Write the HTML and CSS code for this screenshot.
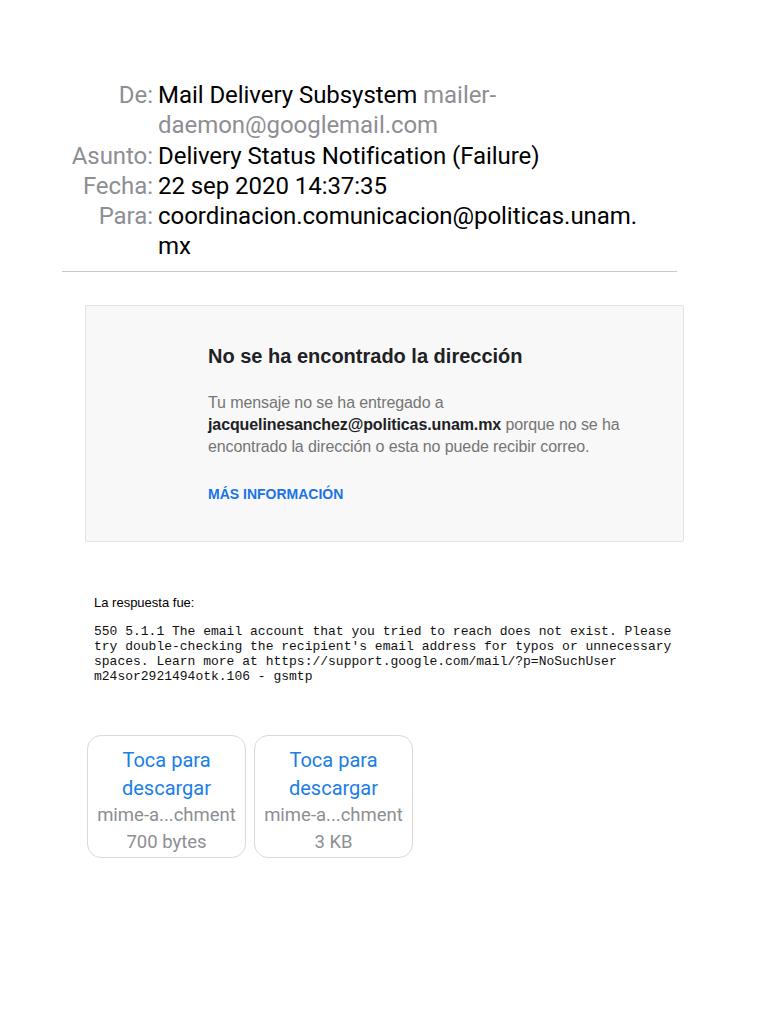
FILE: index.html
```html
<!DOCTYPE html>
<html lang="es">
<head>
<meta charset="utf-8">
<title>Delivery Status Notification (Failure)</title>
<link rel="stylesheet" href="styles.css">
</head>
<body>
<div class="page">
  <div class="headers">
    <div class="label">De:</div>
    <div class="value">Mail Delivery Subsystem <span class="muted">mailer-<br>daemon@googlemail.com</span></div>
    <div class="label">Asunto:</div>
    <div class="value">Delivery Status Notification (Failure)</div>
    <div class="label">Fecha:</div>
    <div class="value">22 sep 2020 14:37:35</div>
    <div class="label">Para:</div>
    <div class="value">coordinacion.comunicacion@politicas.unam.<br>mx</div>
  </div>
  <hr class="divider">
  <div class="card">
    <h1 class="card-title">No se ha encontrado la dirección</h1>
    <p class="card-text">Tu mensaje no se ha entregado a<br><b>jacquelinesanchez@politicas.unam.mx</b> porque no se ha<br>encontrado la dirección o esta no puede recibir correo.</p>
    <a class="card-link">MÁS INFORMACIÓN</a>
  </div>
  <div class="response">
    <p class="response-label">La respuesta fue:</p>
    <pre class="response-code">550 5.1.1 The email account that you tried to reach does not exist. Please
try double-checking the recipient's email address for typos or unnecessary
spaces. Learn more at https://support.google.com/mail/?p=NoSuchUser
m24sor2921494otk.106 - gsmtp</pre>
  </div>
  <div class="attachments">
    <div class="attachment">
      <div class="att-action">Toca para<br>descargar</div>
      <div class="att-meta">mime-a...chment<br>700 bytes</div>
    </div>
    <div class="attachment">
      <div class="att-action">Toca para<br>descargar</div>
      <div class="att-meta">mime-a...chment<br>3 KB</div>
    </div>
  </div>
</div>
</body>
</html>
```
FILE: styles.css
```css
html, body {
  margin: 0;
  padding: 0;
  background: #ffffff;
}
.page {
  width: 768px;
  padding-top: 80px;
  font-family: Roboto, "Liberation Sans", sans-serif;
}
.headers {
  display: grid;
  grid-template-columns: 153px auto;
  column-gap: 5px;
  font-size: 24px;
  line-height: 30.3px;
  color: #000;
  letter-spacing: -0.05px;
}
.label {
  text-align: right;
  color: #8e8e93;
}
.value {
  color: #000;
}
.muted {
  color: #8e8e93;
}
.divider {
  margin: 9px 0 0 62px;
  width: 615px;
  border: none;
  border-top: 1px solid #c8c8c8;
  height: 0;
}
.card {
  margin: 33px 0 0 85px;
  width: 475px;
  height: 235px;
  padding: 0 0 0 122px;
  background: #f8f8f8;
  border: 1px solid #e3e3e3;
  border-radius: 2px;
  font-family: "Liberation Sans", Arial, sans-serif;
  box-sizing: content-box;
}
.card-title {
  margin: 37px 0 0 0;
  font-size: 20px;
  line-height: 26px;
  font-weight: bold;
  color: #202124;
}
.card-text {
  margin: 23px 0 0 0;
  font-size: 16px;
  line-height: 22px;
  color: #757575;
  letter-spacing: -0.1px;
}
.card-text b {
  color: #202124;
}
.card-link {
  display: block;
  margin-top: 27px;
  font-size: 14px;
  line-height: 18px;
  font-weight: bold;
  color: #1a73e8;
}
.response {
  margin: 52px 0 0 94px;
  font-family: "Liberation Sans", Arial, sans-serif;
  color: #000;
}
.response-label {
  margin: 0;
  font-size: 13px;
  line-height: 18px;
}
.response-code {
  margin: 12px 0 0 0;
  font-family: "Liberation Mono", "Courier New", monospace;
  font-size: 13px;
  line-height: 15px;
  color: #111;
}
.attachments {
  display: flex;
  gap: 8px;
  margin: 51px 0 0 87px;
}
.attachment {
  width: 159px;
  height: 123px;
  border: 1px solid #dadada;
  border-radius: 14px;
  text-align: center;
  padding-top: 10px;
  box-sizing: border-box;
  font-family: Roboto, "Liberation Sans", sans-serif;
}
.att-action {
  color: #1a7ee6;
  font-size: 20px;
  line-height: 28px;
}
.att-meta {
  color: #8e8e93;
  font-size: 18.5px;
  line-height: 27px;
}
```
